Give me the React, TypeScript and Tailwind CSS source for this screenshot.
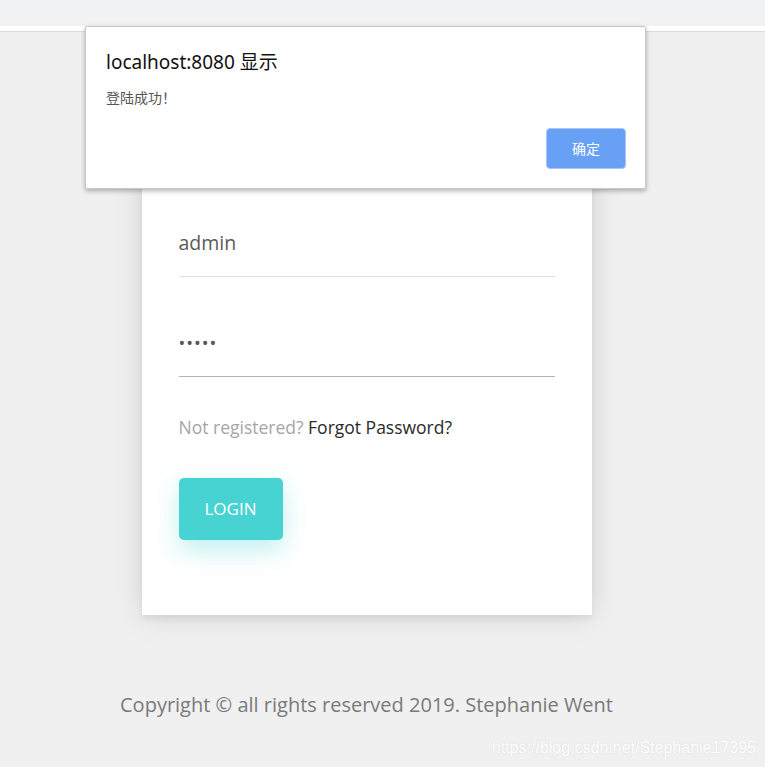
import React from "react";

export default function App() {
  return (
    <div className="relative w-[765px] h-[767px] overflow-hidden bg-[#f0f0f0]" style={{ fontFamily: "'Open Sans', sans-serif" }}>
      {/* top chrome */}
      <div className="h-[26px] bg-[#f1f2f4]" />
      <div className="h-[5px] bg-white" />
      <div className="h-[1px] bg-[#dcdcdc]" />

      {/* page content */}
      <div className="w-[733px] flex flex-col items-center">
        <div className="mt-[98px] w-[450px] bg-white px-[37px] pt-[80px] pb-[75px] shadow-[0_0_30px_0_rgba(0,0,0,0.13),0_4px_6px_0_rgba(0,0,0,0.06)]">
          <div className="h-[67px] border-b border-[#e2e2e2] flex items-center">
            <span className="text-[19.5px] text-[#5a5a5a]">admin</span>
          </div>
          <div className="mt-[33px] h-[67px] border-b border-[#b3b3b3] flex items-center">
            <span className="text-[18px] text-[#555] tracking-[1px]">•••••</span>
          </div>
          <div className="mt-[38px] text-[17.5px] leading-[24px]">
            <span className="text-[#a5a5a5]">Not registered? </span>
            <span className="text-[#2b2b2b]">Forgot Password?</span>
          </div>
          <button className="mt-[39px] w-[104px] h-[62px] rounded-[5px] bg-[#48d3d3] text-white text-[17px] font-medium shadow-[0_10px_25px_rgba(72,211,211,0.35)]">
            LOGIN
          </button>
        </div>
        <div className="mt-[76px] text-[20px] leading-[28px] text-[#7a7a7a]">
          Copyright © all rights reserved 2019. Stephanie Went
        </div>
      </div>

      {/* watermark */}
      <div
        className="absolute right-[9px] top-[737px] text-[16px] leading-[22px] text-white"
        style={{ fontFamily: "'Liberation Sans', Arial, sans-serif", textShadow: "0 0 1px rgba(180,180,180,0.5)" }}
      >
        https://blog.csdn.net/Stephanie17395
      </div>

      {/* alert dialog */}
      <div
        className="absolute left-[85px] top-[26px] w-[561px] h-[163px] flex flex-col bg-white border border-[#c9c9c9] rounded-[2px] pl-[20px] pr-[19px] pt-[22px] pb-[19px] shadow-[0_2px_5px_rgba(0,0,0,0.3)]"
        style={{ fontFamily: "'Noto Sans', 'Noto Sans CJK SC', sans-serif" }}
      >
        <div className="text-[19px] leading-[26px] text-[#111]">localhost:8080 显示</div>
        <div
          className="mt-[12px] text-[14px] leading-[20px] text-[#555]"
          style={{ fontFamily: "'Noto Sans CJK SC', sans-serif" }}
        >
          登陆成功！
        </div>
        <div className="mt-auto flex justify-end">
          <button className="w-[80px] h-[41px] rounded-[4px] bg-[#68a0f6] border border-[#a6c6f9] text-white text-[14px]">
            确定
          </button>
        </div>
      </div>
    </div>
  );
}
